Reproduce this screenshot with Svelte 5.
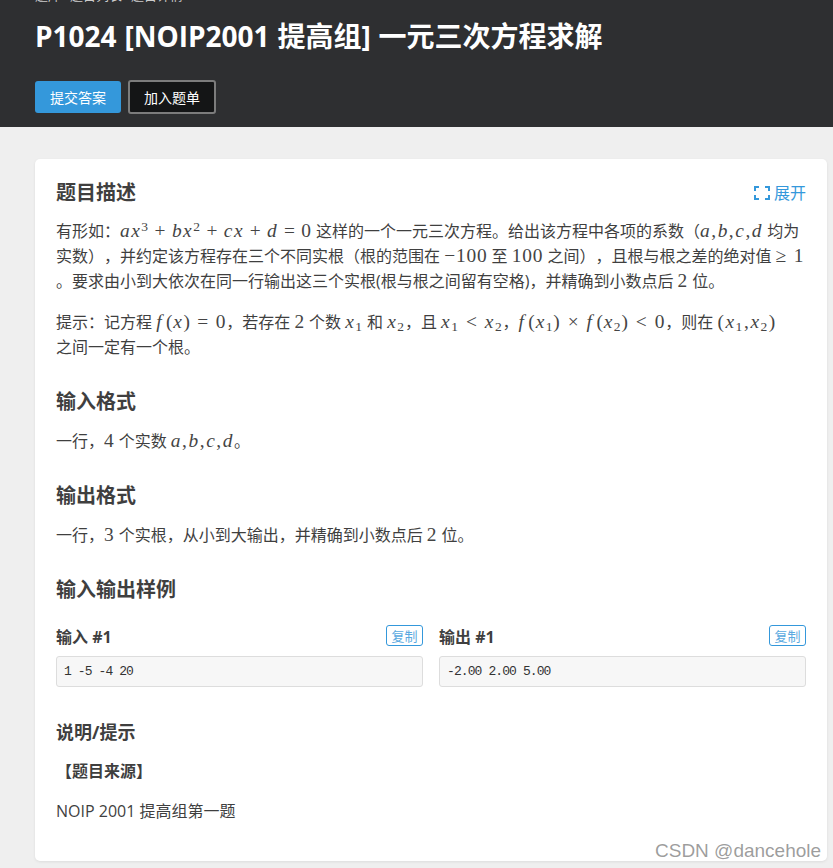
<div class="page">
	<header class="hero">
		<nav class="crumbs"><span>题库</span><span>题目列表</span><span>题目详情</span></nav>
		<h1>P1024 [NOIP2001 提高组] 一元三次方程求解</h1>
		<div class="actions">
			<button class="submit">提交答案</button>
			<button class="add">加入题单</button>
		</div>
	</header>

	<main class="card">
		<div class="title-row">
			<h2>题目描述</h2>
			<a class="expand" href="#top">
				<svg width="16" height="14" viewBox="0 0 16 14" fill="none" stroke="#3498db" stroke-width="2">
					<path d="M1 5V1H5M11 1H15V5M15 9V13H11M5 13H1V9" />
				</svg>
				展开
			</a>
		</div>
		<p>
			有形如：<span class="m poly"><i>ax</i><sup>3</sup> + <i>bx</i><sup>2</sup> + <i>cx</i> + <i>d</i> = 0</span> 这样的一个一元三次方程。给出该方程中各项的系数（<span class="m tuple"><i>a</i>,<i>b</i>,<i>c</i>,<i>d</i></span> 均为<br />
			实数），并约定该方程存在三个不同实根（根的范围在 <span class="m">−100</span> 至 <span class="m">100</span> 之间），且根与根之差的绝对值 <span class="m">≥ 1</span><br />
			。要求由小到大依次在同一行输出这三个实根(根与根之间留有空格)，并精确到小数点后 <span class="m">2</span> 位。
		</p>
		<p>
			提示：记方程 <span class="m"><i class="f">f</i>(<i>x</i>) = 0</span>，若存在 <span class="m">2</span> 个数 <span class="m"><i>x</i><sub>1</sub></span> 和 <span class="m"><i>x</i><sub>2</sub></span>，且 <span class="m rel"><i>x</i><sub>1</sub> &lt; <i>x</i><sub>2</sub></span>，<span class="m rel"><i class="f">f</i>(<i>x</i><sub>1</sub>) × <i class="f">f</i>(<i>x</i><sub>2</sub>) &lt; 0</span>，则在 <span class="m tuple">(<i>x</i><sub>1</sub>,<i>x</i><sub>2</sub>)</span><br />
			之间一定有一个根。
		</p>

		<h2>输入格式</h2>
		<p class="input-format">一行，<span class="m">4</span> 个实数 <span class="m tuple"><i>a</i>,<i>b</i>,<i>c</i>,<i>d</i></span>。</p>

		<h2>输出格式</h2>
		<p>一行，<span class="m">3</span> 个实根，从小到大输出，并精确到小数点后 <span class="m">2</span> 位。</p>

		<h2>输入输出样例</h2>
		<div class="samples">
			{#each samples as s (s.label)}
				<div class="sample">
					<div class="sample-head">
						<h3>{s.label}</h3>
						<button class="copy">复制</button>
					</div>
					<pre>{s.text}</pre>
				</div>
			{/each}
		</div>

		<h2 class="notes">说明/提示</h2>
		<p class="source"><strong>【题目来源】</strong></p>
		<p>NOIP 2001 提高组第一题</p>
	</main>
	<div class="watermark">CSDN @dancehole</div>
</div>

<script>
	const samples = [
		{ label: '输入 #1', text: '1 -5 -4 20' },
		{ label: '输出 #1', text: '-2.00 2.00 5.00' }
	];
</script>

<style>
	:global(body) {
		background: #efefef;
	}
	.page {
		position: relative;
		height: 868px;
		overflow: hidden;
		font-family: 'Open Sans', 'Noto Sans CJK SC', sans-serif;
		color: #3f3f3f;
		text-spacing-trim: space-all;
	}
	.hero {
		background: #2e2f31;
		height: 127px;
		padding: 0 35px;
		box-sizing: border-box;
		color: #fff;
	}
	.crumbs {
		display: flex;
		gap: 9px;
		height: 2px;
		line-height: 0;
		font-size: 13px;
		color: #ccc;
	}
	.crumbs span {
		position: relative;
		top: -5px;
	}
	h1 {
		margin: 0;
		padding-top: 14px;
		font-size: 28px;
		line-height: 40px;
		font-weight: 700;
		word-spacing: 0.5px;
	}
	.actions {
		display: flex;
		align-items: center;
		gap: 7px;
		margin-top: 24px;
	}
	button {
		font-family: inherit;
		cursor: pointer;
	}
	.submit,
	.add {
		font-size: 14px;
		color: #fff;
		border-radius: 3px;
		padding: 0;
	}
	.submit {
		width: 86px;
		height: 32px;
		background: #3498db;
		border: none;
	}
	.add {
		width: 88px;
		height: 34px;
		background: #141516;
		border: 2px solid #7c7c7c;
	}
	.card {
		background: #fff;
		margin: 32px 6px 0 35px;
		height: 702px;
		padding: 21px 21px 0;
		box-sizing: border-box;
		border-radius: 5px;
		box-shadow: 0 1px 3px rgba(0, 0, 0, 0.08);
	}
	.title-row {
		display: flex;
		justify-content: space-between;
		align-items: center;
	}
	h2 {
		margin: 29px 0 14px;
		font-size: 20px;
		line-height: 26px;
		font-weight: 700;
		color: #3f3f3f;
	}
	.title-row h2 {
		margin: 0 0 13px;
	}
	.expand {
		display: flex;
		align-items: center;
		gap: 4px;
		margin-bottom: 13px;
		font-size: 16px;
		line-height: 26px;
		color: #3498db;
		text-decoration: none;
	}
	p {
		margin: 0 0 16px;
		font-size: 16px;
		line-height: 25px;
		white-space: nowrap;
	}
	.input-format {
		margin-bottom: 17px;
	}
	.m {
		font-family: 'Liberation Serif', 'DejaVu Serif', serif;
		font-size: 19.4px;
		line-height: 0;
		letter-spacing: 0.8px;
		word-spacing: 1px;
		color: #444;
	}
	.m.poly {
		word-spacing: 0;
	}
	.m.rel {
		word-spacing: 1.5px;
	}
	.m.tuple {
		letter-spacing: 1.6px;
	}
	.m i {
		letter-spacing: 1.5px;
	}
	.m i.f {
		padding-right: 3px;
	}
	.m sup,
	.m sub {
		font-size: 13.5px;
		line-height: 0;
	}
	.m sup {
		vertical-align: 6px;
	}
	.m sub {
		vertical-align: -3px;
	}
	.samples {
		display: grid;
		grid-template-columns: 1fr 1fr;
		gap: 16px;
		margin-top: 22px;
	}
	.sample-head {
		display: flex;
		justify-content: space-between;
		align-items: flex-start;
		height: 31px;
	}
	h3 {
		margin: 2px 0 0;
		font-size: 16px;
		line-height: 20px;
		font-weight: 700;
	}
	.copy {
		width: 37px;
		height: 21px;
		padding: 0;
		font-size: 13px;
		color: #5aa9e0;
		background: #fff;
		border: 1px solid #3498db;
		border-radius: 3px;
	}
	pre {
		margin: 0;
		height: 31px;
		box-sizing: border-box;
		padding: 0 7px;
		font-family: 'Liberation Mono', monospace;
		font-size: 13px;
		letter-spacing: -0.9px;
		line-height: 29px;
		color: #333;
		background: #f7f7f7;
		border: 1px solid #ddd;
		border-radius: 3px;
	}
	.notes {
		margin-top: 32px;
		margin-bottom: 0;
		font-size: 18px;
	}
	.source {
		margin: 14px 0 15px;
	}
	.watermark {
		position: absolute;
		left: 655px;
		top: 840px;
		font-family: 'Liberation Sans', sans-serif;
		font-size: 19px;
		color: rgba(90, 90, 90, 0.6);
	}
</style>
